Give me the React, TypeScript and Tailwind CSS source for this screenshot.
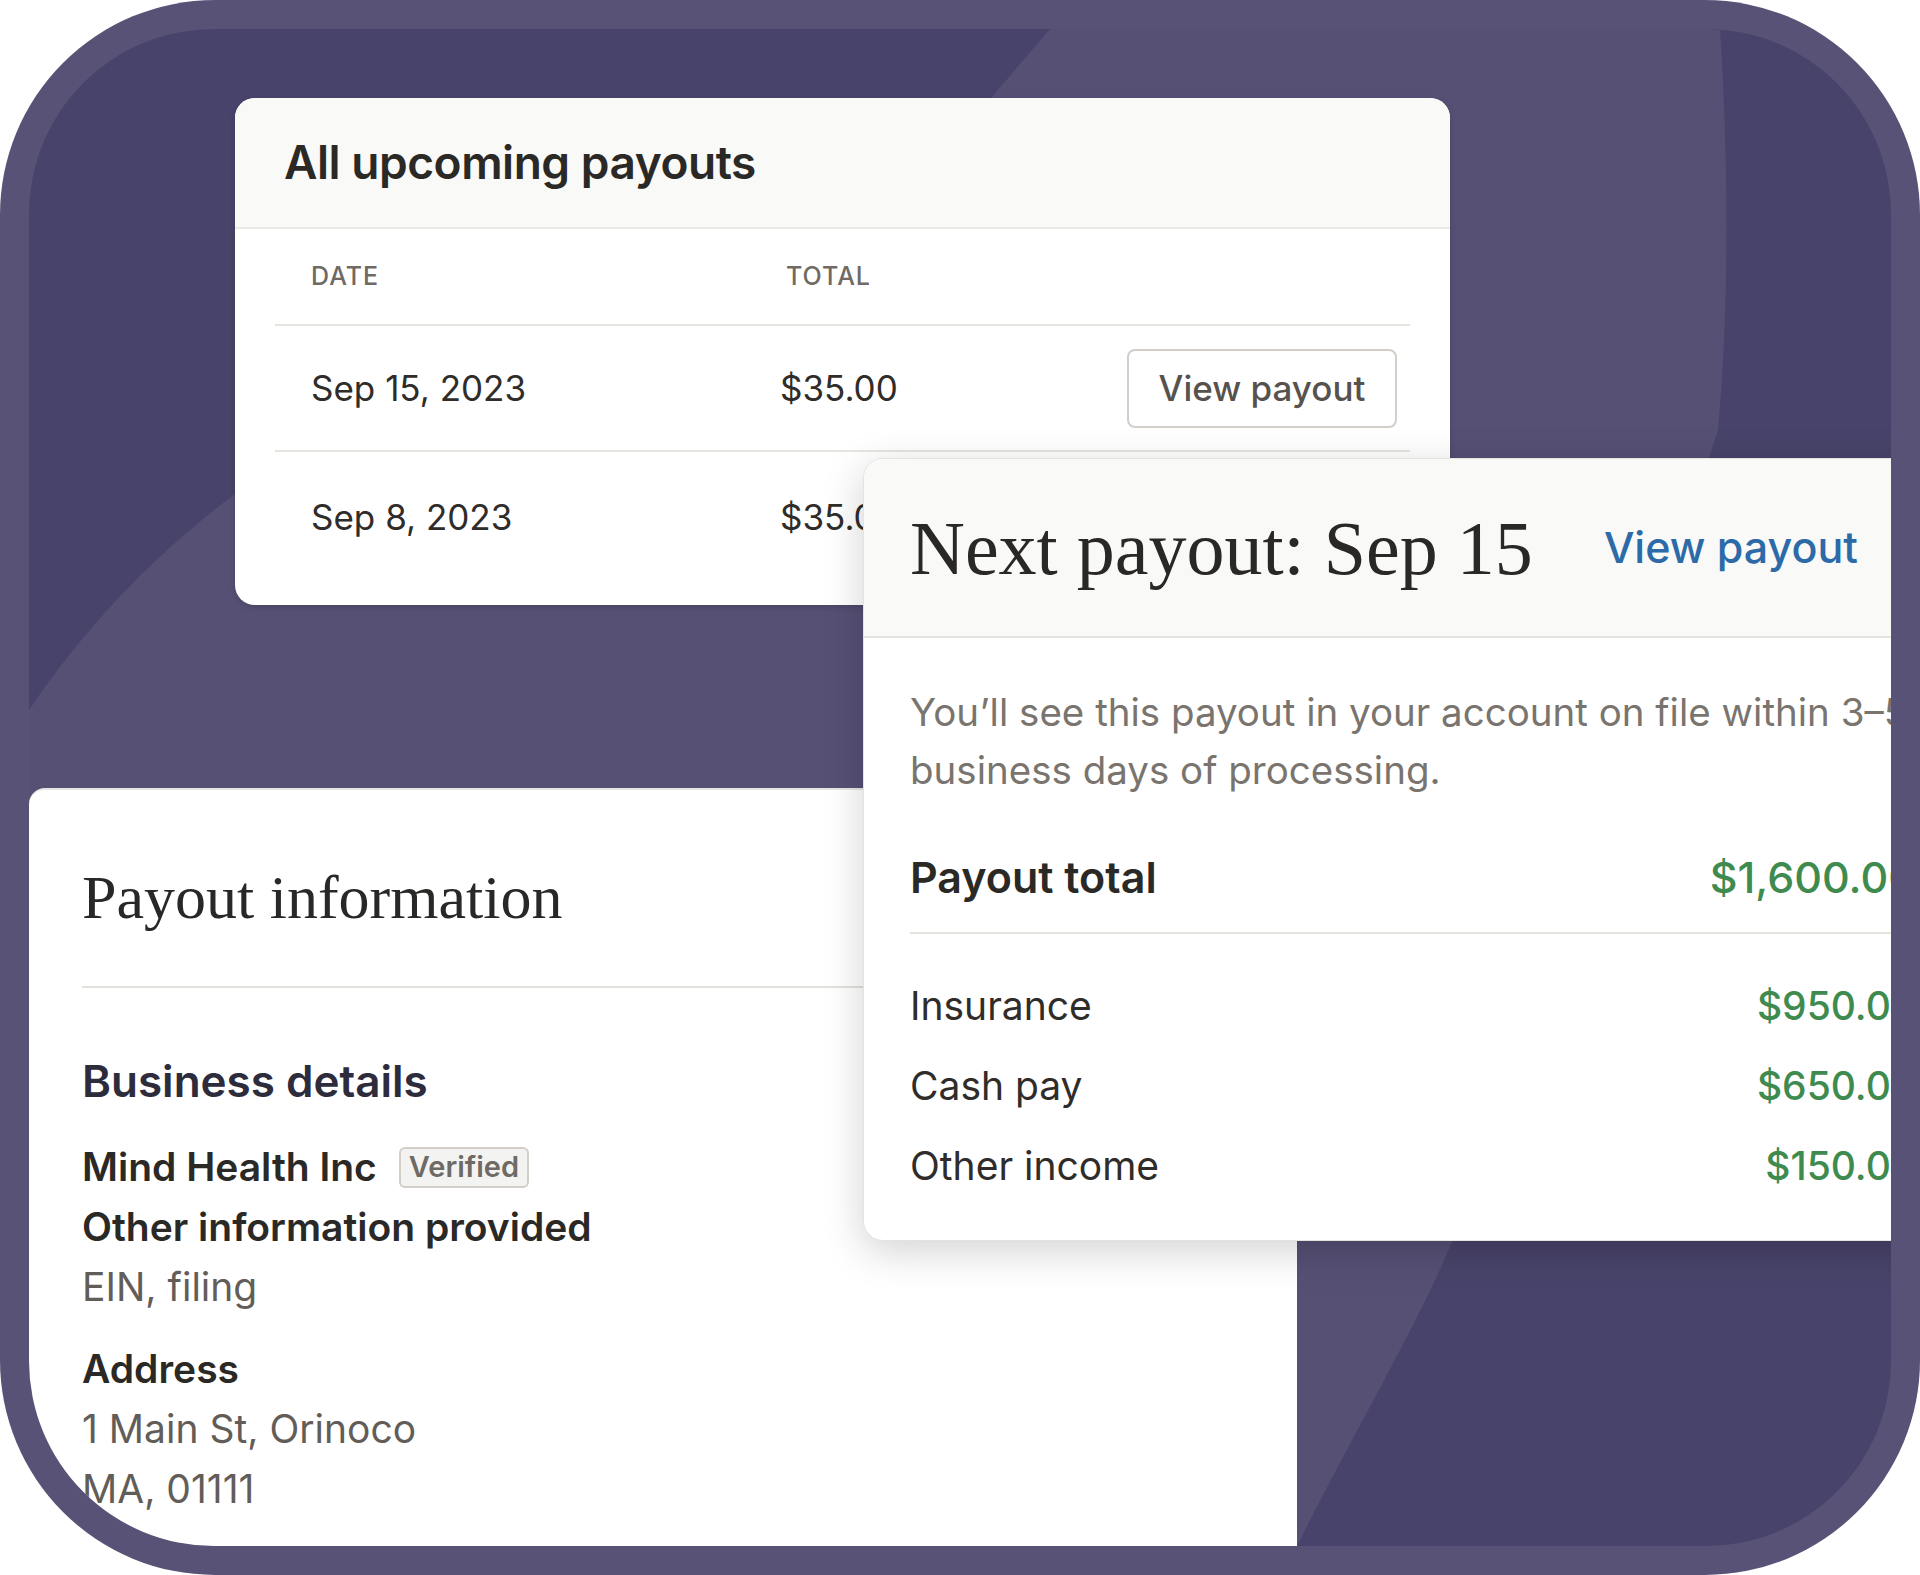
const sans = "font-['Inter','Noto_Sans',sans-serif]";
const serif = "font-['Liberation_Serif','DejaVu_Serif',serif]";

function PayoutRow({ date, total, last }: { date: string; total: string; last?: boolean }) {
  return (
    <div
      className={
        last
          ? 'h-[130px] flex items-center pl-[36px] pr-[13px]'
          : 'h-[126px] flex items-center pl-[36px] pr-[13px] border-b-2 border-[#e8e5e1]'
      }
    >
      <span className="w-[469px] text-[35px] text-[#2f2c29]">{date}</span>
      <span className="flex-1 text-[35px] text-[#2f2c29]">{total}</span>
      {!last && (
        <button className="w-[270px] h-[79px] rounded-[8px] border-2 border-[#d3cfc8] bg-white text-[35px] font-medium text-[#57524d]">
          View payout
        </button>
      )}
    </div>
  );
}

function Breakdown({ label, amount }: { label: string; amount: string }) {
  return (
    <div className="h-[80px] flex items-center justify-between">
      <span className="text-[39px] text-[#2f2c29]">{label}</span>
      <span className="text-[39px] font-medium text-[#3f8b4f]">{amount}</span>
    </div>
  );
}

export default function App() {
  return (
    <div className={`w-[1920px] h-[1575px] bg-white ${sans}`}>
      <div className="h-full rounded-[215px] bg-[#575276] p-[29px]">
        <div className="relative h-[1517px] overflow-hidden rounded-[185px] bg-[#48436a]">
          {/* background sweep */}
          <svg
            className="absolute inset-0 w-full h-full"
            viewBox="29 29 1862 1517"
            preserveAspectRatio="none"
          >
            <path
              d="M1050 29 L1720 29 C1728 150 1730 300 1718 430 L1452 1242 C1420 1320 1350 1440 1297 1546 L29 1546 L29 710 C90 620 160 550 240 490 L985 105 Z"
              fill="#565075"
            />
          </svg>

          {/* All upcoming payouts */}
          <div className="relative z-10 ml-[206px] mt-[69px] w-[1215px] h-[507px] rounded-[20px] bg-white overflow-hidden shadow-[0_2px_6px_rgba(0,0,0,0.15)]">
            <div className="h-[131px] bg-[#f9f9f7] border-b-2 border-[#ebe9e5] flex items-center px-[49px]">
              <h2 className="text-[46px] font-semibold text-[#2b2926] tracking-[-0.01em]">All upcoming payouts</h2>
            </div>
            <div className="mx-[40px]">
              <div className="h-[97px] flex items-center pl-[36px] border-b-2 border-[#e8e5e1] text-[25px] font-medium tracking-[0.04em] text-[#6f6a64]">
                <span className="w-[475px]">DATE</span>
                <span>TOTAL</span>
              </div>
              <PayoutRow date="Sep 15, 2023" total="$35.00" />
              <PayoutRow date="Sep 8, 2023" total="$35.00" last />
            </div>
          </div>

          {/* Payout information */}
          <div className="relative z-10 mt-[183px] w-[1268px] h-[800px] rounded-t-[16px] bg-white border-t-2 border-[#e9e7e3] pt-[71px] px-[53px]">
            <h2 className={`${serif} text-[62px] leading-[72px] text-[#2a2826]`}>Payout information</h2>
            <div className="mt-[53px] h-[2px] bg-[#e3e0dc]" />
            <h3 className="mt-[66px] text-[44px] leading-[54px] font-semibold text-[#2d2c3c]">Business details</h3>
            <div className="mt-[29px] h-[60px] flex items-center gap-[22px]">
              <span className="text-[39px] font-semibold text-[#2b2926]">Mind Health Inc</span>
              <span className="h-[41px] px-[8px] flex items-center rounded-[6px] border-2 border-[#d3cfc8] bg-[#f3f3f2] text-[29px] font-semibold text-[#6f6a64]">
                Verified
              </span>
            </div>
            <div className="h-[60px] flex items-center text-[39px] font-semibold text-[#2b2926]">Other information provided</div>
            <div className="h-[60px] flex items-center text-[39px] text-[#625d58]">EIN, filing</div>
            <div className="mt-[22px] h-[60px] flex items-center text-[39px] font-semibold text-[#2b2926]">Address</div>
            <div className="h-[60px] flex items-center text-[39px] text-[#625d58]">1 Main St, Orinoco</div>
            <div className="h-[60px] flex items-center text-[39px] text-[#625d58]">MA, 01111</div>
          </div>

          {/* Next payout card overlays the others */}
          <div className="absolute z-20 left-[834px] top-[429px] w-[1100px] rounded-[20px] bg-white overflow-hidden border border-[#e6e3df] shadow-[0_10px_40px_rgba(0,0,0,0.18)]">
            <div className="h-[179px] bg-[#f9f9f7] border-b-2 border-[#e6e3df] flex items-center justify-between pl-[46px] pr-[104px]">
              <h2 className={`${serif} text-[76px] leading-none text-[#2a2826]`}>Next payout: Sep 15</h2>
              <a href="#" className="text-[43px] font-medium text-[#2c6aa8]">View payout</a>
            </div>
            <div className="px-[46px] pt-[45px] pb-[34px]">
              <p className="text-[38.5px] leading-[58px] text-[#7a746e] whitespace-nowrap">
                You’ll see this payout in your account on file within 3–5
                <br />
                business days of processing.
              </p>
              <div className="mt-[50px] pb-[27px] border-b-2 border-[#e6e3df] flex items-center justify-between">
                <span className="text-[43px] leading-[56px] font-semibold text-[#2b2926]">Payout total</span>
                <span className="text-[43px] leading-[56px] font-medium text-[#3f8b4f]">$1,600.00</span>
              </div>
              <div className="mt-[32px]">
                <Breakdown label="Insurance" amount="$950.00" />
                <Breakdown label="Cash pay" amount="$650.00" />
                <Breakdown label="Other income" amount="$150.00" />
              </div>
            </div>
          </div>
        </div>
      </div>
    </div>
  );
}
